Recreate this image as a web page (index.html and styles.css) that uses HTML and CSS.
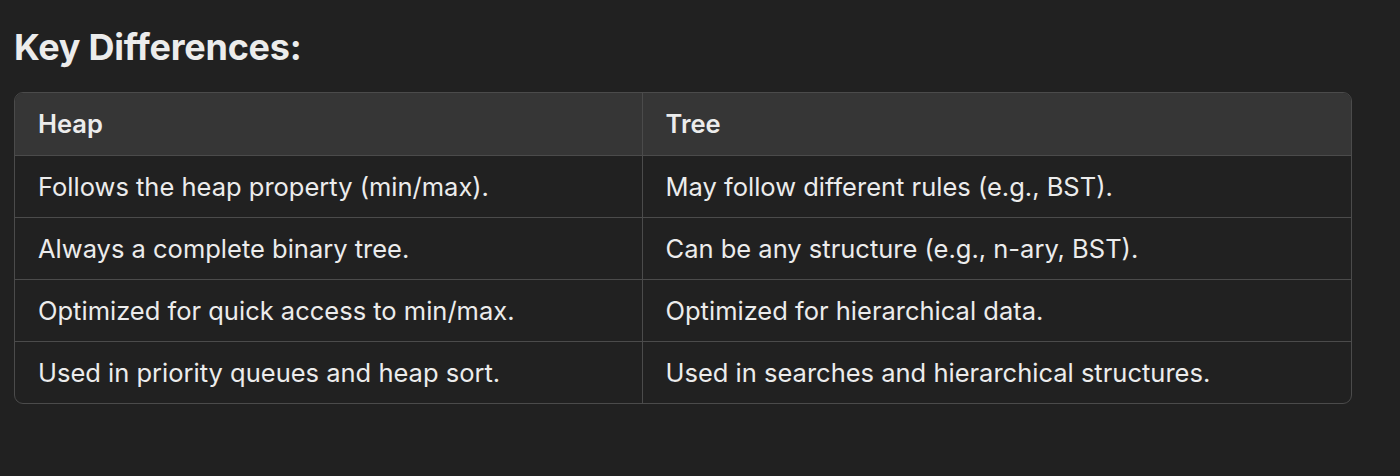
FILE: index.html
```html
<!DOCTYPE html>
<html>
<head>
<meta charset="utf-8">
<link rel="stylesheet" href="styles.css">
</head>
<body>
<div class="page">
  <h3 class="title">Key Differences:</h3>
  <div class="table-wrap">
    <table class="cmp">
      <colgroup><col class="col-a"><col class="col-b"></colgroup>
      <thead>
        <tr><th>Heap</th><th>Tree</th></tr>
      </thead>
      <tbody>
        <tr><td>Follows the heap property (min/max).</td><td>May follow different rules (e.g., BST).</td></tr>
        <tr><td>Always a complete binary tree.</td><td>Can be any structure (e.g., n-ary, BST).</td></tr>
        <tr><td>Optimized for quick access to min/max.</td><td>Optimized for hierarchical data.</td></tr>
        <tr><td>Used in priority queues and heap sort.</td><td>Used in searches and hierarchical structures.</td></tr>
      </tbody>
    </table>
  </div>
</div>
</body>
</html>
```
FILE: styles.css
```css
html, body {
  margin: 0;
  padding: 0;
  background: #212121;
}
body {
  font-family: Inter, "Noto Sans", sans-serif;
  color: #ececec;
}
.page {
  padding: 22px 48px 0 14px;
}
.title {
  margin: 0;
  font-size: 36px;
  font-weight: 700;
  line-height: 50px;
  letter-spacing: -0.25px;
}
.table-wrap {
  margin-top: 20px;
  border: 1.5px solid #4b4b4b;
  border-radius: 9px;
  overflow: hidden;
}
.cmp {
  width: 100%;
  border-collapse: collapse;
  table-layout: fixed;
  font-size: 25.5px;
}
.col-a { width: 627px; }
.cmp th, .cmp td {
  text-align: left;
  padding: 0 24px 0 23px;
  height: 62px;
  box-sizing: border-box;
  border-right: 1.5px solid #4b4b4b;
  border-bottom: 1.5px solid #4b4b4b;
}
.cmp th:last-child, .cmp td:last-child { border-right: none; }
.cmp tbody tr:last-child td { border-bottom: none; }
.cmp th {
  background: #363636;
  font-weight: 600;
}
.cmp td { font-weight: 400; }
```
